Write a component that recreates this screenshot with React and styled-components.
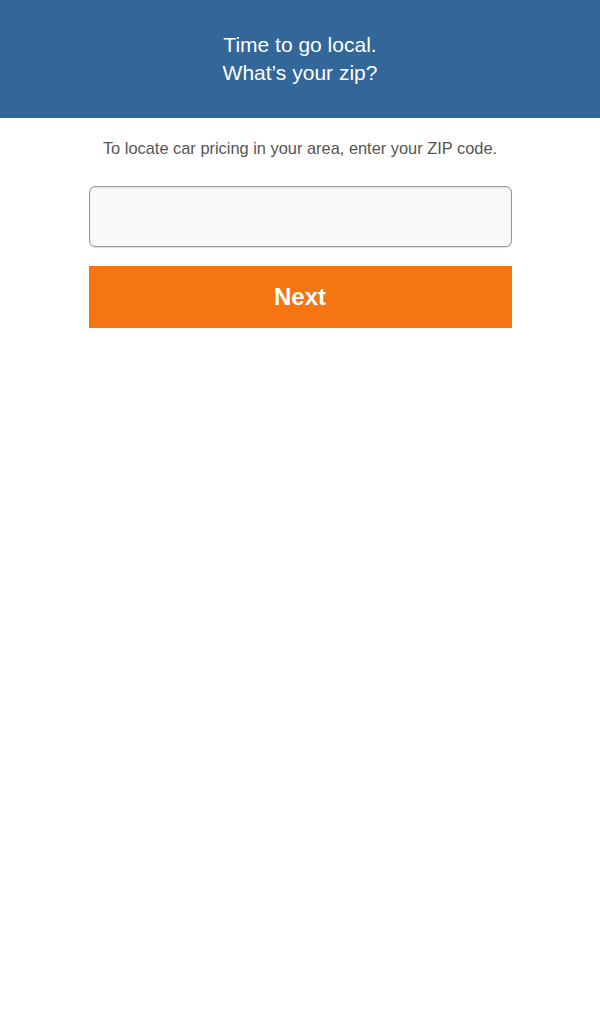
import React, { useState } from 'react';
import styled, { createGlobalStyle } from 'styled-components';

const GlobalStyle = createGlobalStyle`
    body {
        margin: 0;
        background: #fff;
        font-family: "Liberation Sans", Arial, sans-serif;
    }
`;

const Header = styled.header`
    background: #336699;
    height: 118px;
    display: flex;
    align-items: center;
    justify-content: center;
`;

const Title = styled.h1`
    margin: 0;
    color: #fff;
    font-size: 21px;
    font-weight: normal;
    line-height: 28px;
    text-align: center;
`;

const Body = styled.main`
    display: flex;
    flex-direction: column;
    align-items: center;
    padding-top: 20px;
`;

const Intro = styled.p`
    margin: 0 0 28px;
    color: #555;
    font-size: 16.4px;
    line-height: 20px;
`;

const Form = styled.form`
    width: 423px;
    display: flex;
    flex-direction: column;
    gap: 19px;
`;

const ZipInput = styled.input`
    box-sizing: border-box;
    width: 100%;
    height: 61px;
    border: 1px solid #9a9a9a;
    border-radius: 6px;
    background: #f9f9f9;
    box-shadow: inset 0 1px 2px rgba(0, 0, 0, 0.12), 0 1px 1px rgba(0, 0, 0, 0.12);
    font-family: inherit;
    font-size: 20px;
    padding: 0 14px;

    &:focus {
        outline: none;
    }
`;

const NextButton = styled.button`
    height: 62px;
    border: none;
    background: #f47512;
    color: #fff;
    font-family: inherit;
    font-size: 24px;
    font-weight: bold;
    cursor: pointer;
`;

const App = () => {
    const [zip, setZip] = useState('');

    return (
        <>
            <GlobalStyle />
            <Header>
                <Title>
                    Time to go local.
                    <br />
                    What’s your zip?
                </Title>
            </Header>
            <Body>
                <Intro>To locate car pricing in your area, enter your ZIP code.</Intro>
                <Form onSubmit={(e) => e.preventDefault()}>
                    <ZipInput
                        type="text"
                        inputMode="numeric"
                        value={zip}
                        onChange={(e) => setZip(e.target.value)}
                    />
                    <NextButton type="submit">Next</NextButton>
                </Form>
            </Body>
        </>
    );
};

export default App;
